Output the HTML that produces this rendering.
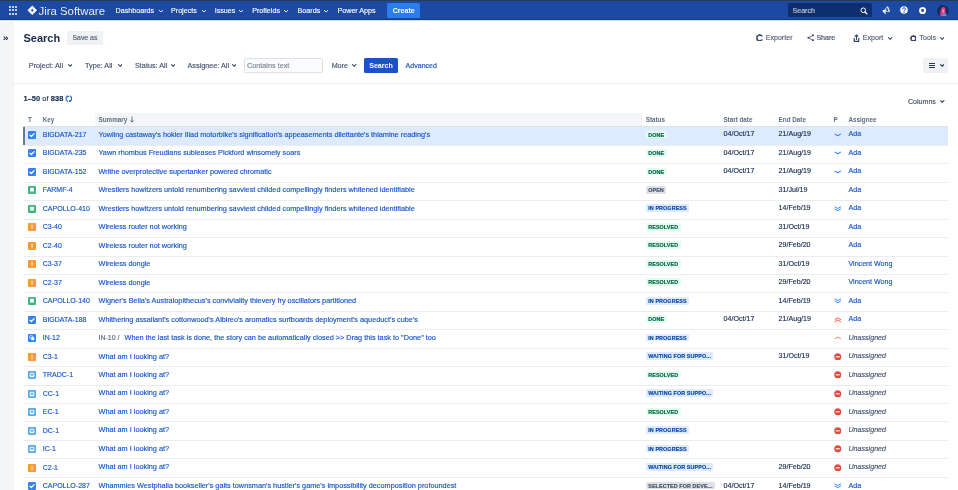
<!DOCTYPE html>
<html><head><meta charset="utf-8"><style>
html,body{margin:0;padding:0;}
body{width:958px;height:490px;overflow:hidden;position:relative;background:#fff;font-family:"Liberation Sans",sans-serif;}
.a{position:absolute;}
.t{position:absolute;white-space:nowrap;line-height:1;-webkit-text-stroke:0.15px currentColor;}
.ti svg{display:block;width:8px;height:8px;}
.pi svg{display:block;width:7.6px;height:7.6px;}
.loz{font-size:5.4px;font-weight:bold;line-height:8.6px;height:7.6px;padding:0 2.4px;border-radius:1.2px;white-space:nowrap;letter-spacing:0.1px;overflow:visible;-webkit-text-stroke:0.15px currentColor;}
</style></head><body><div id="w" style="position:absolute;left:0;top:0;width:958px;height:490px;overflow:hidden;will-change:transform">
<div class="a" style="left:0;top:0;width:958px;height:1px;background:#2B3A55"></div>
<div class="a" style="left:0;top:1px;width:958px;height:18px;background:#1C4AA2"></div>
<div class="a" style="left:0;top:19px;width:958px;height:1px;background:#0A3D99"></div>
<div class="a" style="left:0;top:20px;width:958px;height:1px;background:#D5DDEE"></div>
<div class="a" style="left:8.60px;top:6.30px;width:2px;height:2px;border-radius:1px;background:#fff"></div>
<div class="a" style="left:8.60px;top:9.40px;width:2px;height:2px;border-radius:1px;background:#fff"></div>
<div class="a" style="left:8.60px;top:12.50px;width:2px;height:2px;border-radius:1px;background:#fff"></div>
<div class="a" style="left:11.70px;top:6.30px;width:2px;height:2px;border-radius:1px;background:#fff"></div>
<div class="a" style="left:11.70px;top:9.40px;width:2px;height:2px;border-radius:1px;background:#fff"></div>
<div class="a" style="left:11.70px;top:12.50px;width:2px;height:2px;border-radius:1px;background:#fff"></div>
<div class="a" style="left:14.80px;top:6.30px;width:2px;height:2px;border-radius:1px;background:#fff"></div>
<div class="a" style="left:14.80px;top:9.40px;width:2px;height:2px;border-radius:1px;background:#fff"></div>
<div class="a" style="left:14.80px;top:12.50px;width:2px;height:2px;border-radius:1px;background:#fff"></div>
<svg class="a" style="left:26.5px;top:5px" width="10.5" height="10.5" viewBox="0 0 20 20"><path d="M10 0.8L19.2 10 10 19.2 0.8 10z" fill="#fff"/><path d="M10 7.3L12.7 10 10 12.7 7.3 10z" fill="#1C4AA2"/></svg>
<div class="t" style="left:38.50px;top:5.57px;font-size:11.4px;color:rgba(255,255,255,0.9);font-weight:normal;-webkit-text-stroke:0">Jira Software</div>
<div class="t" style="left:115.60px;top:7.81px;font-size:7.15px;color:#fff;font-weight:normal;-webkit-text-stroke:0.12px #fff">Dashboards</div>
<svg class="a" style="left:158.90px;top:9.72px" width="4.20" height="2.76" viewBox="-0.50 -0.50 4.20 2.76"><path d="M0 0L1.60 1.76L3.20 0" stroke="#fff" stroke-width="1.0" fill="none" stroke-linecap="square" stroke-linejoin="miter"/></svg>
<div class="t" style="left:171.00px;top:7.81px;font-size:7.15px;color:#fff;font-weight:normal;-webkit-text-stroke:0.12px #fff">Projects</div>
<svg class="a" style="left:202.00px;top:9.72px" width="4.20" height="2.76" viewBox="-0.50 -0.50 4.20 2.76"><path d="M0 0L1.60 1.76L3.20 0" stroke="#fff" stroke-width="1.0" fill="none" stroke-linecap="square" stroke-linejoin="miter"/></svg>
<div class="t" style="left:214.70px;top:7.81px;font-size:7.15px;color:#fff;font-weight:normal;-webkit-text-stroke:0.12px #fff">Issues</div>
<svg class="a" style="left:238.70px;top:9.72px" width="4.20" height="2.76" viewBox="-0.50 -0.50 4.20 2.76"><path d="M0 0L1.60 1.76L3.20 0" stroke="#fff" stroke-width="1.0" fill="none" stroke-linecap="square" stroke-linejoin="miter"/></svg>
<div class="t" style="left:252.20px;top:7.81px;font-size:7.15px;color:#fff;font-weight:normal;-webkit-text-stroke:0.12px #fff">Profields</div>
<svg class="a" style="left:284.00px;top:9.72px" width="4.20" height="2.76" viewBox="-0.50 -0.50 4.20 2.76"><path d="M0 0L1.60 1.76L3.20 0" stroke="#fff" stroke-width="1.0" fill="none" stroke-linecap="square" stroke-linejoin="miter"/></svg>
<div class="t" style="left:297.60px;top:7.81px;font-size:7.15px;color:#fff;font-weight:normal;-webkit-text-stroke:0.12px #fff">Boards</div>
<svg class="a" style="left:324.30px;top:9.72px" width="4.20" height="2.76" viewBox="-0.50 -0.50 4.20 2.76"><path d="M0 0L1.60 1.76L3.20 0" stroke="#fff" stroke-width="1.0" fill="none" stroke-linecap="square" stroke-linejoin="miter"/></svg>
<div class="t" style="left:337.50px;top:7.81px;font-size:7.15px;color:#fff;font-weight:normal;-webkit-text-stroke:0.12px #fff">Power Apps</div>
<div class="a" style="left:387.2px;top:2.9px;width:32.8px;height:15.4px;border-radius:1.5px;background:#2B7DEB"></div>
<div class="t" style="left:392.70px;top:7.83px;font-size:7.1px;color:#fff;font-weight:bold;-webkit-text-stroke:0;">Create</div>
<div class="a" style="left:787.8px;top:3.1px;width:84.6px;height:14.4px;border-radius:1.5px;background:#0E2F6E"></div>
<div class="t" style="left:792.50px;top:7.83px;font-size:7.1px;color:#C1C7D0;font-weight:normal;">Search</div>
<svg class="a" style="left:859.5px;top:7px" width="8" height="8" viewBox="0 0 16 16"><circle cx="6.5" cy="6.5" r="4.6" stroke="#fff" stroke-width="2" fill="none"/><path d="M10 10l4 4" stroke="#fff" stroke-width="2.2" stroke-linecap="round"/></svg>
<svg class="a" style="left:882.4px;top:6.4px" width="8" height="8" viewBox="0 0 16 16"><g transform="rotate(-22 8 8)"><path d="M1 6h6.5v4.5H1z" fill="#fff"/><path d="M7.5 6L12.5 3v10.5L7.5 10.5z" fill="none" stroke="#fff" stroke-width="1.3" stroke-linejoin="round"/><path d="M2.5 10.5l0.8 4h2.4l-0.6-4z" fill="#fff"/><path d="M13.8 2.5v11.5" stroke="#fff" stroke-width="1.4"/></g></svg>
<svg class="a" style="left:900.4px;top:6.4px" width="8" height="8" viewBox="0 0 16 16"><circle cx="8" cy="8" r="7.6" fill="#fff"/><path d="M5.3 6.2a2.7 2.7 0 1 1 3.8 2.4c-0.8 0.35-1.1 0.8-1.1 1.6" stroke="#1C4AA2" stroke-width="2" fill="none" stroke-linecap="round"/><circle cx="8" cy="12.6" r="1.2" fill="#1C4AA2"/></svg>
<svg class="a" style="left:918.8px;top:6.6px" width="7.2" height="7.2" viewBox="0 0 16 16"><circle cx="8" cy="8" r="5.4" stroke="#fff" stroke-width="4.2" fill="none"/><g fill="#fff"><rect x="6.4" y="0" width="3.2" height="3" transform="rotate(0 8 8)"/><rect x="6.4" y="0" width="3.2" height="3" transform="rotate(45 8 8)"/><rect x="6.4" y="0" width="3.2" height="3" transform="rotate(90 8 8)"/><rect x="6.4" y="0" width="3.2" height="3" transform="rotate(135 8 8)"/><rect x="6.4" y="0" width="3.2" height="3" transform="rotate(180 8 8)"/><rect x="6.4" y="0" width="3.2" height="3" transform="rotate(225 8 8)"/><rect x="6.4" y="0" width="3.2" height="3" transform="rotate(270 8 8)"/><rect x="6.4" y="0" width="3.2" height="3" transform="rotate(315 8 8)"/></g></svg>
<svg class="a" style="left:936.8px;top:4.6px" width="11.8" height="11.8" viewBox="0 0 24 24"><defs><clipPath id="cc"><circle cx="12" cy="12" r="12"/></clipPath></defs><g clip-path="url(#cc)"><rect width="24" height="24" fill="#1E2A5A"/><path d="M7 24C6 16 7 6 12 4c4-1 6 3 5 8l1 12z" fill="#D93A9A"/><path d="M11 9c2-1 4 0 4 3s-1 4-3 4z" fill="#F7A66B"/><path d="M9 24c1-5 3-7 6-7s5 2 6 7z" fill="#5C8FD6"/></g></svg>
<div class="a" style="left:0;top:22px;width:13.7px;height:468px;background:#F4F5F7"></div>
<svg class="a" style="left:2.9px;top:35.6px" width="5.6" height="4.6" viewBox="0 0 12 10"><path d="M1.5 1.2L5 5 1.5 8.8M6.5 1.2L10 5 6.5 8.8" stroke="#253858" stroke-width="2.3" fill="none" stroke-linejoin="round"/></svg>
<div class="t" style="left:23.50px;top:32.77px;font-size:11.0px;color:#172B4D;font-weight:bold;-webkit-text-stroke:0;">Search</div>
<div class="a" style="left:67px;top:30.6px;width:35.5px;height:14.4px;border-radius:1.5px;background:#F0F1F4"></div>
<div class="t" style="left:72.50px;top:35.23px;font-size:6.9px;color:#505F79;font-weight:normal;">Save as</div>
<svg class="a" style="left:755.6px;top:33.5px" width="7.4" height="7.8" viewBox="0 0 15 16"><path d="M13 4.3L7.5 1.5 2 4.3V11.7L7.5 14.5 13 11.7" stroke="#344563" stroke-width="3" fill="none" stroke-linejoin="miter"/></svg>
<div class="t" style="left:765.70px;top:34.53px;font-size:7.1px;color:#505F79;font-weight:normal;">Exporter</div>
<svg class="a" style="left:806.5px;top:33.8px" width="7.4" height="7.6" viewBox="0 0 16 16"><path d="M13 2.5L3 8l10 5.5" stroke="#42526E" stroke-width="1.8" fill="none"/><circle cx="13" cy="2.5" r="2.3" fill="#42526E"/><circle cx="3" cy="8" r="2.3" fill="#42526E"/><circle cx="13" cy="13.5" r="2.3" fill="#42526E"/></svg>
<div class="t" style="left:816.40px;top:34.53px;font-size:7.1px;color:#42526E;font-weight:normal;">Share</div>
<svg class="a" style="left:853.3px;top:33.6px" width="7" height="8.2" viewBox="0 0 14 17"><path d="M2.3 8.5v6.8h9.4V8.5" stroke="#344563" stroke-width="2.5" fill="none" stroke-linejoin="round"/><path d="M7 11.5V2.2M4 5l3-3 3 3" stroke="#344563" stroke-width="2.3" fill="none" stroke-linecap="round"/></svg>
<div class="t" style="left:862.80px;top:34.53px;font-size:7.1px;color:#505F79;font-weight:normal;">Export</div>
<svg class="a" style="left:888.30px;top:36.94px" width="4.40" height="2.92" viewBox="-0.55 -0.55 4.40 2.92"><path d="M0 0L1.65 1.81L3.30 0" stroke="#42526E" stroke-width="1.1" fill="none" stroke-linecap="square" stroke-linejoin="miter"/></svg>
<svg class="a" style="left:909.5px;top:34.5px" width="6.8" height="6.8" viewBox="0 0 16 16"><circle cx="8" cy="8" r="5.6" stroke="#344563" stroke-width="3.0" fill="none"/><g fill="#344563"><rect x="6.5" y="0" width="3.0" height="3" transform="rotate(0 8 8)"/><rect x="6.5" y="0" width="3.0" height="3" transform="rotate(45 8 8)"/><rect x="6.5" y="0" width="3.0" height="3" transform="rotate(90 8 8)"/><rect x="6.5" y="0" width="3.0" height="3" transform="rotate(135 8 8)"/><rect x="6.5" y="0" width="3.0" height="3" transform="rotate(180 8 8)"/><rect x="6.5" y="0" width="3.0" height="3" transform="rotate(225 8 8)"/><rect x="6.5" y="0" width="3.0" height="3" transform="rotate(270 8 8)"/><rect x="6.5" y="0" width="3.0" height="3" transform="rotate(315 8 8)"/></g></svg>
<div class="t" style="left:919.40px;top:34.53px;font-size:7.1px;color:#505F79;font-weight:normal;">Tools</div>
<svg class="a" style="left:940.00px;top:36.94px" width="4.40" height="2.92" viewBox="-0.55 -0.55 4.40 2.92"><path d="M0 0L1.65 1.81L3.30 0" stroke="#42526E" stroke-width="1.1" fill="none" stroke-linecap="square" stroke-linejoin="miter"/></svg>
<div class="t" style="left:28.80px;top:61.66px;font-size:7.25px;color:#42526E;font-weight:normal;">Project: All</div>
<svg class="a" style="left:68.00px;top:64.14px" width="4.40" height="2.92" viewBox="-0.55 -0.55 4.40 2.92"><path d="M0 0L1.65 1.81L3.30 0" stroke="#42526E" stroke-width="1.1" fill="none" stroke-linecap="square" stroke-linejoin="miter"/></svg>
<div class="t" style="left:85.00px;top:61.66px;font-size:7.25px;color:#42526E;font-weight:normal;">Type: All</div>
<svg class="a" style="left:118.00px;top:64.14px" width="4.40" height="2.92" viewBox="-0.55 -0.55 4.40 2.92"><path d="M0 0L1.65 1.81L3.30 0" stroke="#42526E" stroke-width="1.1" fill="none" stroke-linecap="square" stroke-linejoin="miter"/></svg>
<div class="t" style="left:135.00px;top:61.66px;font-size:7.25px;color:#42526E;font-weight:normal;">Status: All</div>
<svg class="a" style="left:170.50px;top:64.14px" width="4.40" height="2.92" viewBox="-0.55 -0.55 4.40 2.92"><path d="M0 0L1.65 1.81L3.30 0" stroke="#42526E" stroke-width="1.1" fill="none" stroke-linecap="square" stroke-linejoin="miter"/></svg>
<div class="t" style="left:187.50px;top:61.66px;font-size:7.25px;color:#42526E;font-weight:normal;">Assignee: All</div>
<svg class="a" style="left:231.50px;top:64.14px" width="4.40" height="2.92" viewBox="-0.55 -0.55 4.40 2.92"><path d="M0 0L1.65 1.81L3.30 0" stroke="#42526E" stroke-width="1.1" fill="none" stroke-linecap="square" stroke-linejoin="miter"/></svg>
<div class="a" style="left:244px;top:58.1px;width:79.3px;height:14.5px;box-sizing:border-box;border:1px solid #DFE1E6;border-radius:1.5px;background:#FAFBFC"></div>
<div class="t" style="left:247.00px;top:61.66px;font-size:7.25px;color:#7A869A;font-weight:normal;">Contains text</div>
<div class="t" style="left:331.70px;top:62.63px;font-size:7.1px;color:#42526E;font-weight:normal;">More</div>
<svg class="a" style="left:352.30px;top:64.14px" width="4.40" height="2.92" viewBox="-0.55 -0.55 4.40 2.92"><path d="M0 0L1.65 1.81L3.30 0" stroke="#42526E" stroke-width="1.1" fill="none" stroke-linecap="square" stroke-linejoin="miter"/></svg>
<div class="a" style="left:363.9px;top:58px;width:34.4px;height:14.6px;border-radius:1.5px;background:#1B52C4"></div>
<div class="t" style="left:369.20px;top:62.63px;font-size:7.1px;color:#fff;font-weight:bold;-webkit-text-stroke:0;">Search</div>
<div class="t" style="left:405.60px;top:61.76px;font-size:7.05px;color:#1A4FB5;font-weight:normal;">Advanced</div>
<div class="a" style="left:922.9px;top:58px;width:25.4px;height:14.6px;border-radius:1.5px;background:#F0F1F4"></div>
<div class="a" style="left:929px;top:62.90px;width:5.8px;height:1.1px;background:#253858"></div>
<div class="a" style="left:929px;top:65.00px;width:5.8px;height:1.1px;background:#253858"></div>
<div class="a" style="left:929px;top:67.10px;width:5.8px;height:1.1px;background:#253858"></div>
<svg class="a" style="left:939.80px;top:64.04px" width="4.40" height="2.92" viewBox="-0.55 -0.55 4.40 2.92"><path d="M0 0L1.65 1.81L3.30 0" stroke="#253858" stroke-width="1.1" fill="none" stroke-linecap="square" stroke-linejoin="miter"/></svg>
<div class="a" style="left:13.6px;top:82.6px;width:945px;height:1px;background:#EBECF0"></div>
<div class="t" style="left:23.50px;top:95.46px;font-size:7.45px;color:#172B4D;font-weight:normal;letter-spacing:0.05px"><b>1–50</b> of <b>838</b></div>
<svg class="a" style="left:64.6px;top:94.9px" width="7.6" height="7.4" viewBox="0 0 15 15"><path d="M5 2.2A6 6 0 0 0 5 12.8" stroke="#2063D8" stroke-width="2.2" fill="none" stroke-linecap="round"/><path d="M10 2.2A6 6 0 0 1 10 12.8" stroke="#2063D8" stroke-width="2.2" fill="none" stroke-linecap="round"/><circle cx="5.5" cy="3.2" r="1.9" fill="#1558D6"/><circle cx="9.5" cy="12" r="1.9" fill="#1558D6"/></svg>
<div class="t" style="left:907.90px;top:98.83px;font-size:7.1px;color:#42526E;font-weight:normal;">Columns</div>
<svg class="a" style="left:940.30px;top:100.09px" width="4.50" height="3.01" viewBox="-0.60 -0.60 4.50 3.01"><path d="M0 0L1.65 1.81L3.30 0" stroke="#42526E" stroke-width="1.2" fill="none" stroke-linecap="square" stroke-linejoin="miter"/></svg>
<div class="a" style="left:95px;top:113px;width:546.7px;height:13.5px;background:#F4F5F7"></div>
<div class="a" style="left:23px;top:126px;width:925.3px;height:1px;background:#DFE1E6"></div>
<div class="t" style="left:28.00px;top:117.33px;font-size:6.3px;color:#5E6C84;font-weight:bold;-webkit-text-stroke:0;">T</div>
<div class="t" style="left:42.75px;top:117.33px;font-size:6.3px;color:#5E6C84;font-weight:bold;-webkit-text-stroke:0;">Key</div>
<div class="t" style="left:98.50px;top:117.33px;font-size:6.3px;color:#5E6C84;font-weight:bold;-webkit-text-stroke:0;">Summary</div>
<div class="t" style="left:645.70px;top:117.33px;font-size:6.3px;color:#5E6C84;font-weight:bold;-webkit-text-stroke:0;">Status</div>
<div class="t" style="left:723.40px;top:117.33px;font-size:6.3px;color:#5E6C84;font-weight:bold;-webkit-text-stroke:0;">Start date</div>
<div class="t" style="left:778.60px;top:117.33px;font-size:6.3px;color:#5E6C84;font-weight:bold;-webkit-text-stroke:0;">End Date</div>
<div class="t" style="left:833.40px;top:117.33px;font-size:6.3px;color:#5E6C84;font-weight:bold;-webkit-text-stroke:0;">P</div>
<div class="t" style="left:848.50px;top:117.33px;font-size:6.3px;color:#5E6C84;font-weight:bold;-webkit-text-stroke:0;">Assignee</div>
<svg class="a" style="left:129.5px;top:115.5px" width="4" height="7" viewBox="0 0 8 14"><path d="M4 1v11M1 9l3 3.2L7 9" stroke="#42526E" stroke-width="1.6" fill="none"/></svg>
<div class="a" style="left:23px;top:126.85px;width:925.3px;height:18.44px;background:#DEEBFF"></div>
<div class="a" style="left:23px;top:126.85px;width:1.8px;height:18.44px;background:#6B778C"></div>
<div class="a" style="left:23px;top:144.89px;width:925.3px;height:1px;background:#EBECF0"></div>
<div class="a ti" style="left:28px;top:130.85px"><svg class="ti" viewBox="0 0 16 16"><rect x="0" y="0" width="16" height="16" rx="2" fill="#3581F0"/><path d="M3.8 8.3l2.9 2.7L12.3 5.2" stroke="#fff" stroke-width="2.5" fill="none" stroke-linecap="round" stroke-linejoin="round"/></svg></div>
<div class="t" style="left:42.75px;top:130.83px;font-size:7.0px;color:#1655C9;font-weight:normal;">BIGDATA-217</div>
<div class="t" style="left:98.50px;top:130.68px;font-size:7.3px;color:#1655C9;font-weight:normal;">Yowling castaway's hokier Iliad motorbike's signification's appeasements dilettante's thiamine reading's</div>
<div class="a loz" style="left:645.8px;top:130.55px;background:#E3FCEF;color:#006644">DONE</div>
<div class="t" style="left:723.60px;top:131.38px;font-size:7.1px;color:#172B4D;font-weight:normal;">04/Oct/17</div>
<div class="t" style="left:778.60px;top:131.38px;font-size:7.1px;color:#172B4D;font-weight:normal;">21/Aug/19</div>
<div class="a pi" style="left:833.6px;top:130.85px"><svg class="pi" viewBox="0 0 16 16"><path d="M2 6.5l6 3.5 6-3.5" stroke="#2684FF" stroke-width="2.2" fill="none" stroke-linecap="round" stroke-linejoin="round"/></svg></div>
<div class="t" style="left:848.50px;top:131.38px;font-size:7.1px;color:#1655C9;font-weight:normal;">Ada</div><div class="a" style="left:23px;top:163.33px;width:925.3px;height:1px;background:#EBECF0"></div>
<div class="a ti" style="left:28px;top:149.33px"><svg class="ti" viewBox="0 0 16 16"><rect x="0" y="0" width="16" height="16" rx="2" fill="#3581F0"/><path d="M3.8 8.3l2.9 2.7L12.3 5.2" stroke="#fff" stroke-width="2.5" fill="none" stroke-linecap="round" stroke-linejoin="round"/></svg></div>
<div class="t" style="left:42.75px;top:149.32px;font-size:7.0px;color:#1655C9;font-weight:normal;">BIGDATA-235</div>
<div class="t" style="left:98.50px;top:149.17px;font-size:7.3px;color:#1655C9;font-weight:normal;">Yawn rhombus Freudians subleases Pickford winsomely soars</div>
<div class="a loz" style="left:645.8px;top:149.03px;background:#E3FCEF;color:#006644">DONE</div>
<div class="t" style="left:723.60px;top:149.87px;font-size:7.1px;color:#172B4D;font-weight:normal;">04/Oct/17</div>
<div class="t" style="left:778.60px;top:149.87px;font-size:7.1px;color:#172B4D;font-weight:normal;">21/Aug/19</div>
<div class="a pi" style="left:833.6px;top:149.33px"><svg class="pi" viewBox="0 0 16 16"><path d="M2 6.5l6 3.5 6-3.5" stroke="#2684FF" stroke-width="2.2" fill="none" stroke-linecap="round" stroke-linejoin="round"/></svg></div>
<div class="t" style="left:848.50px;top:149.87px;font-size:7.1px;color:#1655C9;font-weight:normal;">Ada</div><div class="a" style="left:23px;top:181.77px;width:925.3px;height:1px;background:#EBECF0"></div>
<div class="a ti" style="left:28px;top:167.82px"><svg class="ti" viewBox="0 0 16 16"><rect x="0" y="0" width="16" height="16" rx="2" fill="#3581F0"/><path d="M3.8 8.3l2.9 2.7L12.3 5.2" stroke="#fff" stroke-width="2.5" fill="none" stroke-linecap="round" stroke-linejoin="round"/></svg></div>
<div class="t" style="left:42.75px;top:167.80px;font-size:7.0px;color:#1655C9;font-weight:normal;">BIGDATA-152</div>
<div class="t" style="left:98.50px;top:167.65px;font-size:7.3px;color:#1655C9;font-weight:normal;">Writhe overprotective supertanker powered chromatic</div>
<div class="a loz" style="left:645.8px;top:167.52px;background:#E3FCEF;color:#006644">DONE</div>
<div class="t" style="left:723.60px;top:168.35px;font-size:7.1px;color:#172B4D;font-weight:normal;">04/Oct/17</div>
<div class="t" style="left:778.60px;top:168.35px;font-size:7.1px;color:#172B4D;font-weight:normal;">21/Aug/19</div>
<div class="a pi" style="left:833.6px;top:167.82px"><svg class="pi" viewBox="0 0 16 16"><path d="M2 6.5l6 3.5 6-3.5" stroke="#2684FF" stroke-width="2.2" fill="none" stroke-linecap="round" stroke-linejoin="round"/></svg></div>
<div class="t" style="left:848.50px;top:168.35px;font-size:7.1px;color:#1655C9;font-weight:normal;">Ada</div><div class="a" style="left:23px;top:200.21px;width:925.3px;height:1px;background:#EBECF0"></div>
<div class="a ti" style="left:28px;top:186.31px"><svg class="ti" viewBox="0 0 16 16"><rect x="0" y="0" width="16" height="16" rx="2" fill="#45B37F"/><path d="M4.5 3.5h7v9l-3.5-2.6L4.5 12.5z" fill="#fff"/></svg></div>
<div class="t" style="left:42.75px;top:186.29px;font-size:7.0px;color:#1655C9;font-weight:normal;">FARMF-4</div>
<div class="t" style="left:98.50px;top:186.14px;font-size:7.3px;color:#1655C9;font-weight:normal;">Wrestlers howitzers untold renumbering savviest childed compellingly finders whitened identifiable</div>
<div class="a loz" style="left:645.8px;top:186.00px;background:#DFE1E6;color:#42526E">OPEN</div>
<div class="t" style="left:778.60px;top:186.84px;font-size:7.1px;color:#172B4D;font-weight:normal;">31/Jul/19</div>
<div class="t" style="left:848.50px;top:186.84px;font-size:7.1px;color:#1655C9;font-weight:normal;">Ada</div><div class="a" style="left:23px;top:218.65px;width:925.3px;height:1px;background:#EBECF0"></div>
<div class="a ti" style="left:28px;top:204.79px"><svg class="ti" viewBox="0 0 16 16"><rect x="0" y="0" width="16" height="16" rx="2" fill="#45B37F"/><path d="M4.5 3.5h7v9l-3.5-2.6L4.5 12.5z" fill="#fff"/></svg></div>
<div class="t" style="left:42.75px;top:204.77px;font-size:7.0px;color:#1655C9;font-weight:normal;">CAPOLLO-410</div>
<div class="t" style="left:98.50px;top:204.62px;font-size:7.3px;color:#1655C9;font-weight:normal;">Wrestlers howitzers untold renumbering savviest childed compellingly finders whitened identifiable</div>
<div class="a loz" style="left:645.8px;top:204.49px;background:#DEEBFF;color:#0747A6">IN PROGRESS</div>
<div class="t" style="left:778.60px;top:205.32px;font-size:7.1px;color:#172B4D;font-weight:normal;">14/Feb/19</div>
<div class="a pi" style="left:833.6px;top:204.79px"><svg class="pi" viewBox="0 0 16 16"><path d="M2 4l6 3.5 6-3.5M2 8.5l6 3.5 6-3.5" stroke="#2684FF" stroke-width="2" fill="none" stroke-linecap="round" stroke-linejoin="round"/></svg></div>
<div class="t" style="left:848.50px;top:205.32px;font-size:7.1px;color:#1655C9;font-weight:normal;">Ada</div><div class="a" style="left:23px;top:237.09px;width:925.3px;height:1px;background:#EBECF0"></div>
<div class="a ti" style="left:28px;top:223.28px"><svg class="ti" viewBox="0 0 16 16"><rect x="0" y="0" width="16" height="16" rx="2" fill="#F79A34"/><rect x="7" y="3.5" width="2" height="6" fill="#fff"/><rect x="7" y="10.8" width="2" height="2" fill="#fff"/></svg></div>
<div class="t" style="left:42.75px;top:223.26px;font-size:7.0px;color:#1655C9;font-weight:normal;">C3-40</div>
<div class="t" style="left:98.50px;top:223.11px;font-size:7.3px;color:#1655C9;font-weight:normal;">Wireless router not working</div>
<div class="a loz" style="left:645.8px;top:222.97px;background:#E3FCEF;color:#006644">RESOLVED</div>
<div class="t" style="left:778.60px;top:223.81px;font-size:7.1px;color:#172B4D;font-weight:normal;">31/Oct/19</div>
<div class="t" style="left:848.50px;top:223.81px;font-size:7.1px;color:#1655C9;font-weight:normal;">Ada</div><div class="a" style="left:23px;top:255.53px;width:925.3px;height:1px;background:#EBECF0"></div>
<div class="a ti" style="left:28px;top:241.76px"><svg class="ti" viewBox="0 0 16 16"><rect x="0" y="0" width="16" height="16" rx="2" fill="#F79A34"/><rect x="7" y="3.5" width="2" height="6" fill="#fff"/><rect x="7" y="10.8" width="2" height="2" fill="#fff"/></svg></div>
<div class="t" style="left:42.75px;top:241.74px;font-size:7.0px;color:#1655C9;font-weight:normal;">C2-40</div>
<div class="t" style="left:98.50px;top:241.59px;font-size:7.3px;color:#1655C9;font-weight:normal;">Wireless router not working</div>
<div class="a loz" style="left:645.8px;top:241.46px;background:#E3FCEF;color:#006644">RESOLVED</div>
<div class="t" style="left:778.60px;top:242.29px;font-size:7.1px;color:#172B4D;font-weight:normal;">29/Feb/20</div>
<div class="t" style="left:848.50px;top:242.29px;font-size:7.1px;color:#1655C9;font-weight:normal;">Ada</div><div class="a" style="left:23px;top:273.97px;width:925.3px;height:1px;background:#EBECF0"></div>
<div class="a ti" style="left:28px;top:260.25px"><svg class="ti" viewBox="0 0 16 16"><rect x="0" y="0" width="16" height="16" rx="2" fill="#F79A34"/><rect x="7" y="3.5" width="2" height="6" fill="#fff"/><rect x="7" y="10.8" width="2" height="2" fill="#fff"/></svg></div>
<div class="t" style="left:42.75px;top:260.23px;font-size:7.0px;color:#1655C9;font-weight:normal;">C3-37</div>
<div class="t" style="left:98.50px;top:260.08px;font-size:7.3px;color:#1655C9;font-weight:normal;">Wireless dongle</div>
<div class="a loz" style="left:645.8px;top:259.94px;background:#E3FCEF;color:#006644">RESOLVED</div>
<div class="t" style="left:778.60px;top:260.78px;font-size:7.1px;color:#172B4D;font-weight:normal;">31/Oct/19</div>
<div class="t" style="left:848.50px;top:260.78px;font-size:7.1px;color:#1655C9;font-weight:normal;">Vincent Wong</div><div class="a" style="left:23px;top:292.41px;width:925.3px;height:1px;background:#EBECF0"></div>
<div class="a ti" style="left:28px;top:278.73px"><svg class="ti" viewBox="0 0 16 16"><rect x="0" y="0" width="16" height="16" rx="2" fill="#F79A34"/><rect x="7" y="3.5" width="2" height="6" fill="#fff"/><rect x="7" y="10.8" width="2" height="2" fill="#fff"/></svg></div>
<div class="t" style="left:42.75px;top:278.71px;font-size:7.0px;color:#1655C9;font-weight:normal;">C2-37</div>
<div class="t" style="left:98.50px;top:278.56px;font-size:7.3px;color:#1655C9;font-weight:normal;">Wireless dongle</div>
<div class="a loz" style="left:645.8px;top:278.43px;background:#E3FCEF;color:#006644">RESOLVED</div>
<div class="t" style="left:778.60px;top:279.26px;font-size:7.1px;color:#172B4D;font-weight:normal;">29/Feb/20</div>
<div class="t" style="left:848.50px;top:279.26px;font-size:7.1px;color:#1655C9;font-weight:normal;">Vincent Wong</div><div class="a" style="left:23px;top:310.85px;width:925.3px;height:1px;background:#EBECF0"></div>
<div class="a ti" style="left:28px;top:297.21px"><svg class="ti" viewBox="0 0 16 16"><rect x="0" y="0" width="16" height="16" rx="2" fill="#45B37F"/><path d="M4.5 3.5h7v9l-3.5-2.6L4.5 12.5z" fill="#fff"/></svg></div>
<div class="t" style="left:42.75px;top:297.20px;font-size:7.0px;color:#1655C9;font-weight:normal;">CAPOLLO-140</div>
<div class="t" style="left:98.50px;top:297.05px;font-size:7.3px;color:#1655C9;font-weight:normal;">Wigner's Bella's Australopithecus's conviviality thievery fry oscillators partitioned</div>
<div class="a loz" style="left:645.8px;top:296.91px;background:#DEEBFF;color:#0747A6">IN PROGRESS</div>
<div class="t" style="left:778.60px;top:297.75px;font-size:7.1px;color:#172B4D;font-weight:normal;">14/Feb/19</div>
<div class="a pi" style="left:833.6px;top:297.21px"><svg class="pi" viewBox="0 0 16 16"><path d="M2 4l6 3.5 6-3.5M2 8.5l6 3.5 6-3.5" stroke="#2684FF" stroke-width="2" fill="none" stroke-linecap="round" stroke-linejoin="round"/></svg></div>
<div class="t" style="left:848.50px;top:297.75px;font-size:7.1px;color:#1655C9;font-weight:normal;">Ada</div><div class="a" style="left:23px;top:329.29px;width:925.3px;height:1px;background:#EBECF0"></div>
<div class="a ti" style="left:28px;top:315.70px"><svg class="ti" viewBox="0 0 16 16"><rect x="0" y="0" width="16" height="16" rx="2" fill="#3581F0"/><path d="M3.8 8.3l2.9 2.7L12.3 5.2" stroke="#fff" stroke-width="2.5" fill="none" stroke-linecap="round" stroke-linejoin="round"/></svg></div>
<div class="t" style="left:42.75px;top:315.68px;font-size:7.0px;color:#1655C9;font-weight:normal;">BIGDATA-188</div>
<div class="t" style="left:98.50px;top:315.53px;font-size:7.3px;color:#1655C9;font-weight:normal;">Whithering assailant's cottonwood's Albireo's aromatics surfboards deployment's aqueduct's cube's</div>
<div class="a loz" style="left:645.8px;top:315.40px;background:#E3FCEF;color:#006644">DONE</div>
<div class="t" style="left:723.60px;top:316.23px;font-size:7.1px;color:#172B4D;font-weight:normal;">04/Oct/17</div>
<div class="t" style="left:778.60px;top:316.23px;font-size:7.1px;color:#172B4D;font-weight:normal;">21/Aug/19</div>
<div class="a pi" style="left:833.6px;top:315.70px"><svg class="pi" viewBox="0 0 16 16"><path d="M2 7.5l6-3.5 6 3.5M2 12l6-3.5 6 3.5" stroke="#FF5630" stroke-width="2" fill="none" stroke-linecap="round" stroke-linejoin="round"/></svg></div>
<div class="t" style="left:848.50px;top:316.23px;font-size:7.1px;color:#1655C9;font-weight:normal;">Ada</div><div class="a" style="left:23px;top:347.73px;width:925.3px;height:1px;background:#EBECF0"></div>
<div class="a ti" style="left:28px;top:334.19px"><svg class="ti" viewBox="0 0 16 16"><rect x="0" y="0" width="16" height="16" rx="2" fill="#2684FF"/><rect x="3.5" y="3.5" width="6" height="5" rx="1" fill="none" stroke="#fff" stroke-width="1.5"/><rect x="6.5" y="6.5" width="6" height="6" rx="1" fill="#fff"/></svg></div>
<div class="t" style="left:42.75px;top:334.17px;font-size:7.0px;color:#1655C9;font-weight:normal;">IN-12</div>
<div class="t" style="left:98.50px;top:334.17px;font-size:7.0px;color:#5E6C84;font-weight:normal;">IN-10 /</div>
<div class="t" style="left:124.50px;top:334.02px;font-size:7.3px;color:#1655C9;font-weight:normal;">When the last task is done, the story can be automatically closed &gt;&gt; Drag this task to "Done" too</div>
<div class="a loz" style="left:645.8px;top:333.88px;background:#DEEBFF;color:#0747A6">IN PROGRESS</div>
<div class="a pi" style="left:833.6px;top:334.19px"><svg class="pi" viewBox="0 0 16 16"><path d="M2 10l6-3.5 6 3.5" stroke="#FF7452" stroke-width="2" fill="none" stroke-linecap="round" stroke-linejoin="round"/></svg></div>
<div class="t" style="left:848.50px;top:334.72px;font-size:7.1px;color:#42526E;font-weight:normal;font-style:italic">Unassigned</div><div class="a" style="left:23px;top:366.17px;width:925.3px;height:1px;background:#EBECF0"></div>
<div class="a ti" style="left:28px;top:352.67px"><svg class="ti" viewBox="0 0 16 16"><rect x="0" y="0" width="16" height="16" rx="2" fill="#F79A34"/><rect x="7" y="3.5" width="2" height="6" fill="#fff"/><rect x="7" y="10.8" width="2" height="2" fill="#fff"/></svg></div>
<div class="t" style="left:42.75px;top:352.65px;font-size:7.0px;color:#1655C9;font-weight:normal;">C3-1</div>
<div class="t" style="left:98.50px;top:352.50px;font-size:7.3px;color:#1655C9;font-weight:normal;">What am I looking at?</div>
<div class="a loz" style="left:645.8px;top:352.37px;background:#DEEBFF;color:#0747A6">WAITING FOR SUPPO...</div>
<div class="t" style="left:778.60px;top:353.20px;font-size:7.1px;color:#172B4D;font-weight:normal;">31/Oct/19</div>
<div class="a pi" style="left:833.6px;top:352.67px"><svg class="pi" viewBox="0 0 16 16"><circle cx="8" cy="8" r="7.5" fill="#E5493A"/><rect x="3.8" y="6.8" width="8.4" height="2.4" fill="#fff"/></svg></div>
<div class="t" style="left:848.50px;top:353.20px;font-size:7.1px;color:#42526E;font-weight:normal;font-style:italic">Unassigned</div><div class="a" style="left:23px;top:384.61px;width:925.3px;height:1px;background:#EBECF0"></div>
<div class="a ti" style="left:28px;top:371.16px"><svg class="ti" viewBox="0 0 16 16"><rect x="0" y="0" width="16" height="16" rx="2" fill="#5AAAE6"/><rect x="3.5" y="3.5" width="9" height="9" rx="1.5" fill="#fff"/><rect x="5.3" y="5.3" width="5.4" height="4" fill="#5AAAE6"/></svg></div>
<div class="t" style="left:42.75px;top:371.14px;font-size:7.0px;color:#1655C9;font-weight:normal;">TRADC-1</div>
<div class="t" style="left:98.50px;top:370.99px;font-size:7.3px;color:#1655C9;font-weight:normal;">What am I looking at?</div>
<div class="a loz" style="left:645.8px;top:370.86px;background:#E3FCEF;color:#006644">RESOLVED</div>
<div class="a pi" style="left:833.6px;top:371.16px"><svg class="pi" viewBox="0 0 16 16"><circle cx="8" cy="8" r="7.5" fill="#E5493A"/><rect x="3.8" y="6.8" width="8.4" height="2.4" fill="#fff"/></svg></div>
<div class="t" style="left:848.50px;top:371.69px;font-size:7.1px;color:#42526E;font-weight:normal;font-style:italic">Unassigned</div><div class="a" style="left:23px;top:403.05px;width:925.3px;height:1px;background:#EBECF0"></div>
<div class="a ti" style="left:28px;top:389.64px"><svg class="ti" viewBox="0 0 16 16"><rect x="0" y="0" width="16" height="16" rx="2" fill="#5AAAE6"/><rect x="3.5" y="3.5" width="9" height="9" rx="1.5" fill="#fff"/><rect x="5.3" y="5.3" width="5.4" height="4" fill="#5AAAE6"/></svg></div>
<div class="t" style="left:42.75px;top:389.62px;font-size:7.0px;color:#1655C9;font-weight:normal;">CC-1</div>
<div class="t" style="left:98.50px;top:389.47px;font-size:7.3px;color:#1655C9;font-weight:normal;">What am I looking at?</div>
<div class="a loz" style="left:645.8px;top:389.34px;background:#DEEBFF;color:#0747A6">WAITING FOR SUPPO...</div>
<div class="a pi" style="left:833.6px;top:389.64px"><svg class="pi" viewBox="0 0 16 16"><circle cx="8" cy="8" r="7.5" fill="#E5493A"/><rect x="3.8" y="6.8" width="8.4" height="2.4" fill="#fff"/></svg></div>
<div class="t" style="left:848.50px;top:390.17px;font-size:7.1px;color:#42526E;font-weight:normal;font-style:italic">Unassigned</div><div class="a" style="left:23px;top:421.49px;width:925.3px;height:1px;background:#EBECF0"></div>
<div class="a ti" style="left:28px;top:408.13px"><svg class="ti" viewBox="0 0 16 16"><rect x="0" y="0" width="16" height="16" rx="2" fill="#5AAAE6"/><rect x="3.5" y="3.5" width="9" height="9" rx="1.5" fill="#fff"/><rect x="5.3" y="5.3" width="5.4" height="4" fill="#5AAAE6"/></svg></div>
<div class="t" style="left:42.75px;top:408.11px;font-size:7.0px;color:#1655C9;font-weight:normal;">EC-1</div>
<div class="t" style="left:98.50px;top:407.96px;font-size:7.3px;color:#1655C9;font-weight:normal;">What am I looking at?</div>
<div class="a loz" style="left:645.8px;top:407.83px;background:#E3FCEF;color:#006644">RESOLVED</div>
<div class="a pi" style="left:833.6px;top:408.13px"><svg class="pi" viewBox="0 0 16 16"><circle cx="8" cy="8" r="7.5" fill="#E5493A"/><rect x="3.8" y="6.8" width="8.4" height="2.4" fill="#fff"/></svg></div>
<div class="t" style="left:848.50px;top:408.66px;font-size:7.1px;color:#42526E;font-weight:normal;font-style:italic">Unassigned</div><div class="a" style="left:23px;top:439.93px;width:925.3px;height:1px;background:#EBECF0"></div>
<div class="a ti" style="left:28px;top:426.61px"><svg class="ti" viewBox="0 0 16 16"><rect x="0" y="0" width="16" height="16" rx="2" fill="#5AAAE6"/><rect x="3.5" y="3.5" width="9" height="9" rx="1.5" fill="#fff"/><rect x="5.3" y="5.3" width="5.4" height="4" fill="#5AAAE6"/></svg></div>
<div class="t" style="left:42.75px;top:426.59px;font-size:7.0px;color:#1655C9;font-weight:normal;">DC-1</div>
<div class="t" style="left:98.50px;top:426.44px;font-size:7.3px;color:#1655C9;font-weight:normal;">What am I looking at?</div>
<div class="a loz" style="left:645.8px;top:426.31px;background:#DEEBFF;color:#0747A6">IN PROGRESS</div>
<div class="a pi" style="left:833.6px;top:426.61px"><svg class="pi" viewBox="0 0 16 16"><circle cx="8" cy="8" r="7.5" fill="#E5493A"/><rect x="3.8" y="6.8" width="8.4" height="2.4" fill="#fff"/></svg></div>
<div class="t" style="left:848.50px;top:427.14px;font-size:7.1px;color:#42526E;font-weight:normal;font-style:italic">Unassigned</div><div class="a" style="left:23px;top:458.37px;width:925.3px;height:1px;background:#EBECF0"></div>
<div class="a ti" style="left:28px;top:445.10px"><svg class="ti" viewBox="0 0 16 16"><rect x="0" y="0" width="16" height="16" rx="2" fill="#5AAAE6"/><rect x="3.5" y="3.5" width="9" height="9" rx="1.5" fill="#fff"/><rect x="5.3" y="5.3" width="5.4" height="4" fill="#5AAAE6"/></svg></div>
<div class="t" style="left:42.75px;top:445.08px;font-size:7.0px;color:#1655C9;font-weight:normal;">IC-1</div>
<div class="t" style="left:98.50px;top:444.93px;font-size:7.3px;color:#1655C9;font-weight:normal;">What am I looking at?</div>
<div class="a loz" style="left:645.8px;top:444.80px;background:#DEEBFF;color:#0747A6">IN PROGRESS</div>
<div class="a pi" style="left:833.6px;top:445.10px"><svg class="pi" viewBox="0 0 16 16"><circle cx="8" cy="8" r="7.5" fill="#E5493A"/><rect x="3.8" y="6.8" width="8.4" height="2.4" fill="#fff"/></svg></div>
<div class="t" style="left:848.50px;top:445.63px;font-size:7.1px;color:#42526E;font-weight:normal;font-style:italic">Unassigned</div><div class="a" style="left:23px;top:476.81px;width:925.3px;height:1px;background:#EBECF0"></div>
<div class="a ti" style="left:28px;top:463.58px"><svg class="ti" viewBox="0 0 16 16"><rect x="0" y="0" width="16" height="16" rx="2" fill="#F79A34"/><rect x="7" y="3.5" width="2" height="6" fill="#fff"/><rect x="7" y="10.8" width="2" height="2" fill="#fff"/></svg></div>
<div class="t" style="left:42.75px;top:463.56px;font-size:7.0px;color:#1655C9;font-weight:normal;">C2-1</div>
<div class="t" style="left:98.50px;top:463.41px;font-size:7.3px;color:#1655C9;font-weight:normal;">What am I looking at?</div>
<div class="a loz" style="left:645.8px;top:463.28px;background:#DEEBFF;color:#0747A6">WAITING FOR SUPPO...</div>
<div class="t" style="left:778.60px;top:464.11px;font-size:7.1px;color:#172B4D;font-weight:normal;">29/Feb/20</div>
<div class="a pi" style="left:833.6px;top:463.58px"><svg class="pi" viewBox="0 0 16 16"><circle cx="8" cy="8" r="7.5" fill="#E5493A"/><rect x="3.8" y="6.8" width="8.4" height="2.4" fill="#fff"/></svg></div>
<div class="t" style="left:848.50px;top:464.11px;font-size:7.1px;color:#42526E;font-weight:normal;font-style:italic">Unassigned</div><div class="a" style="left:23px;top:495.25px;width:925.3px;height:1px;background:#EBECF0"></div>
<div class="a ti" style="left:28px;top:482.07px"><svg class="ti" viewBox="0 0 16 16"><rect x="0" y="0" width="16" height="16" rx="2" fill="#3581F0"/><path d="M3.8 8.3l2.9 2.7L12.3 5.2" stroke="#fff" stroke-width="2.5" fill="none" stroke-linecap="round" stroke-linejoin="round"/></svg></div>
<div class="t" style="left:42.75px;top:482.05px;font-size:7.0px;color:#1655C9;font-weight:normal;">CAPOLLO-287</div>
<div class="t" style="left:98.50px;top:481.90px;font-size:7.3px;color:#1655C9;font-weight:normal;">Whammies Westphalia bookseller's gaits townsman's hustler's game's impossibility decomposition profoundest</div>
<div class="a loz" style="left:645.8px;top:481.77px;background:#DFE1E6;color:#42526E">SELECTED FOR DEVE...</div>
<div class="t" style="left:723.60px;top:482.60px;font-size:7.1px;color:#172B4D;font-weight:normal;">04/Oct/17</div>
<div class="t" style="left:778.60px;top:482.60px;font-size:7.1px;color:#172B4D;font-weight:normal;">14/Feb/19</div>
<div class="a pi" style="left:833.6px;top:482.07px"><svg class="pi" viewBox="0 0 16 16"><path d="M2 4l6 3.5 6-3.5M2 8.5l6 3.5 6-3.5" stroke="#2684FF" stroke-width="2" fill="none" stroke-linecap="round" stroke-linejoin="round"/></svg></div>
<div class="t" style="left:848.50px;top:482.60px;font-size:7.1px;color:#1655C9;font-weight:normal;">Ada</div>
</div></body></html>
